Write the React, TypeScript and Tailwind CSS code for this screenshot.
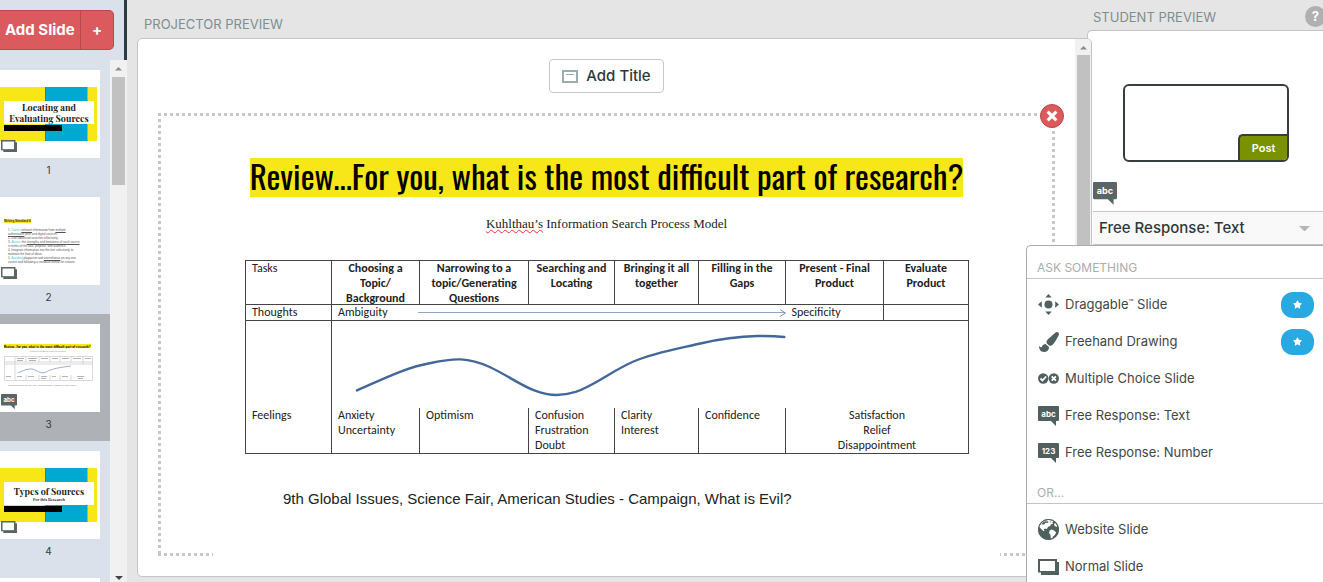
import type { ReactNode } from 'react';
import { FaPaintBrush, FaStar, FaTimes } from 'react-icons/fa';

const ASK_ITEMS = [
  { label: 'Draggable', suffix: ' Slide', icon: <DragIcon />, trademark: true, starred: true },
  { label: 'Freehand Drawing', icon: <FaPaintBrush className="size-5" />, starred: true },
  { label: 'Multiple Choice Slide', icon: <ChoiceIcon /> },
  { label: 'Free Response: Text', icon: <BubbleIcon text="abc" /> },
  { label: 'Free Response: Number', icon: <BubbleIcon text="123" /> },
];

const OTHER_ITEMS = [
  { label: 'Website Slide', icon: <GlobeIcon /> },
  { label: 'Normal Slide', icon: <SlideIcon className="w-[21px]" /> },
];

const HEADINGS = [
  'Choosing a Topic/ Background',
  'Narrowing to a topic/Generating Questions',
  'Searching and Locating',
  'Bringing it all together',
  'Filling in the Gaps',
  'Present - Final Product',
  'Evaluate Product',
];

const COLUMN_WIDTHS = [86, 88, 109, 86, 84, 87, 98, 85];

const FEELINGS = [
  ['Anxiety', 'Uncertainty'],
  ['Optimism'],
  ['Confusion', 'Frustration', 'Doubt'],
  ['Clarity', 'Interest'],
  ['Confidence'],
];

function DragIcon() {
  return (
    <svg viewBox="0 0 21 21" className="size-[21px]" fill="currentColor">
      <circle cx="10.5" cy="10.5" r="4" />
      <path d="M10.5 0l3.2 3.6H7.3zM10.5 21l3.2-3.6H7.3zM0 10.5l3.8-3.2v6.4zM21 10.5l-3.8-3.2v6.4z" />
    </svg>
  );
}

function ChoiceIcon() {
  return (
    <svg viewBox="0 0 21 11" className="w-[21px]" fill="none">
      <circle cx="5.2" cy="5.5" r="5.2" fill="currentColor" />
      <circle cx="15.8" cy="5.5" r="5.2" fill="currentColor" />
      <path d="M2.5 5.5l2 2 3.6-4" stroke="white" strokeWidth="1.8" />
      <path d="M13.7 3.4l4.2 4.2M17.9 3.4l-4.2 4.2" stroke="white" strokeWidth="1.8" />
    </svg>
  );
}

function BubbleIcon({ text, className = 'w-[21px]' }: { text: string; className?: string }) {
  return (
    <svg viewBox="0 0 21 20" className={className}>
      <path d="M1 0h19a1 1 0 0 1 1 1v13a1 1 0 0 1-1 1h-2v5l-5-5H1a1 1 0 0 1-1-1V1a1 1 0 0 1 1-1z" fill="currentColor" />
      <text x="10.5" y="10.5" textAnchor="middle" fontSize="8" fontWeight="700" fontFamily="Inter, sans-serif" fill="white">
        {text}
      </text>
    </svg>
  );
}

function GlobeIcon() {
  return (
    <svg viewBox="0 0 21 21" className="size-[21px]">
      <circle cx="10.5" cy="10.5" r="10.5" fill="currentColor" />
      <path d="M4.5 2.8l3-1.4 4-.6 4 1.2-1.2 1.5.8 1.3-2.2.4-.5 1.6-2.4 1.2-1.2 2-1.9-.6-1.3 1.4 1.1 1.2-1.4.1-2.6-2.7L1 7.4z" fill="white" />
      <path d="M11.6 11.6l2-1 2.8 1.2 1.7 1.7-1.2 2.6-2 1.5-.7 2.1-1.4-.4-.3-3.2-1.4-2zM16 4.8l1.7-.6 1.8 3.3-1.5.3-1.6-1z" fill="white" />
      <path d="M4.6 3.4l2.6-1.2 3.4.3-.8 1.5-2.2-.2-1.4 1.6-2.6.2zM11.5 2.4l1.8.4-.8.9z" fill="currentColor" />
      <circle cx="10.5" cy="10.5" r="10" fill="none" stroke="currentColor" />
    </svg>
  );
}

function SlideIcon({ className }: { className: string }) {
  return (
    <svg viewBox="0 0 21 16" className={className}>
      <path d="M3 3h18v13H3z" fill="currentColor" />
      <path d="M0 0h19v13.5H0z" fill="currentColor" />
      <path d="M2 2h15v10H2z" fill="white" />
    </svg>
  );
}

function Arrow({ down = false, className }: { down?: boolean; className: string }) {
  return (
    <svg viewBox="0 0 8 4" className={className} fill="currentColor">
      <path d={down ? 'M0 0h8L4 4z' : 'M0 4h8L4 0z'} />
    </svg>
  );
}

function Thumb({ number, selected = false, icon, children }: { number: number; selected?: boolean; icon: ReactNode; children: ReactNode }) {
  return (
    <li className={selected ? 'h-[127px] shrink-0 bg-[#aeb2b7] pt-[10px]' : 'h-[127px] shrink-0 bg-[#dbe1ea] pt-[10px]'}>
      <div className="relative h-[88px] w-[100px] overflow-hidden bg-white">
        {children}
        <span className="absolute top-[70px] left-px text-[#5a6665]">{icon}</span>
      </div>
      <p className="w-[97px] pt-1 text-center text-[10px] leading-4 text-[#333b3d]">{number}</p>
    </li>
  );
}

function CoverArt({ children }: { children: ReactNode }) {
  return (
    <div className="mt-[17px] h-[54px] w-[97px] bg-[linear-gradient(90deg,#f7e618_0_45px,#4f7a5c_45px_46px,#00a9d0_46px_87px,#8fc06a_87px_88px,#f7e618_88px)] pt-[14px] pl-1">
      <div className="flex h-[23px] w-[90px] flex-col justify-center bg-white text-center font-['Playfair_Display','Liberation_Serif',serif] font-bold whitespace-nowrap text-[#222]">
        {children}
      </div>
      <div className="mt-px h-[6px] w-[58px] bg-black" />
    </div>
  );
}

function StandardArt() {
  return (
    <div className="pt-[22px] pl-1 font-['Liberation_Sans',sans-serif] text-[3px] leading-[4px] whitespace-nowrap text-[#555]">
      <p className="text-[#333]">
        <strong className="inline-block bg-[#f7e618]">Writing Standard 8</strong>
      </p>
      <div className="pt-[5px] pl-1">
        <p>1. <span className="text-[#27d3e8]">Gather</span> <u>relevant</u> information from <u>multiple</u></p>
        <p><u>authoritative</u> print and digital sources.</p>
        <p>2. Use advanced searches effectively.</p>
        <p>3. <span className="text-[#27d3e8]">Assess</span> the <u>strengths and limitations of each source</u></p>
        <p>in terms of the task, purpose, and audience.</p>
        <p>4. Integrate information into the text selectively to</p>
        <p>maintain the flow of ideas.</p>
        <p>5. <span className="text-[#27d3e8]">Avoiding</span> plagiarism and <u>overreliance</u> on any one</p>
        <p>source and following a standard format for citation.</p>
      </div>
    </div>
  );
}

function ReviewArt() {
  return (
    <div className="pt-5 pl-1 leading-[4px] whitespace-nowrap text-[#777]">
      <p className="font-[Oswald,'Liberation_Sans',sans-serif] text-[4px] text-black">
        <span className="inline-block bg-[#f7e618]">Review...For you, what is the most difficult part of research?</span>
      </p>
      <p className="w-[88px] pt-px text-center font-['Liberation_Serif',serif] text-[2px]">Kuhlthau’s Information Search Process Model</p>
      <svg viewBox="0 0 89 25" className="mt-[3px] h-[25px] w-[89px]" fill="none">
        <path d="M.5.5h88v24H.5zM.5 6h88M.5 8h88M11 .5v24M22 .5V6M35 .5V6M46 .5V6M56 .5V6M67 .5V6M79 .5V8M22 19v5M35 19v5M46 19v5M56 19v5M67 19v5" stroke="#c9c9cd" strokeWidth="0.7" />
        <path d="M14 17C22 13 27 12 31 14S38 18 42 16 50 12 67 10" stroke="#8494b5" strokeWidth="0.8" />
        <path d="M13 2.5h7M24 2.5h9M37 2.5h7M48 2.5h6M58 2.5h7M69 2.5h8M81 2.5h6M13 4.5h6M25 4.5h7M13 20.5h5M24 20.5h6M37 20.5h6M48 20.5h4M58 20.5h6M73 20.5h7M2 20.5h5M37 22.5h5M74 22.5h5" stroke="#a0a0a8" strokeWidth="0.8" />
      </svg>
      <p className="pt-[2px] pl-1 font-['Liberation_Sans',sans-serif] text-[2px]">
        9th Global Issues, Science Fair, American Studies - Campaign, What is Evil?
      </p>
    </div>
  );
}

function Sidebar() {
  return (
    <aside className="flex w-[127px] shrink-0 flex-col">
      <div className="flex h-[60px] shrink-0 items-center border-r-[3px] border-[#2f3b42] bg-[#dbe1ea]">
        <div className="flex h-10 w-[114px] rounded-r-[5px] border border-l-0 border-[#b9484c] bg-[#db5a5e] font-bold text-white">
          <button className="flex-1 border-r border-[#b9484c] pl-[5px] text-left text-[15px] whitespace-nowrap">Add Slide</button>
          <button className="w-8 text-[15px]" aria-label="Choose slide type">+</button>
        </div>
      </div>
      <div className="flex min-h-0 flex-1">
        <ol className="flex w-[110px] flex-col overflow-hidden bg-[#dbe1ea]">
          <Thumb number={1} icon={<SlideIcon className="w-4" />}>
            <CoverArt>
              <p className="text-[9px] leading-[11px]">Locating and</p>
              <p className="text-[9px] leading-[11px]">Evaluating Sources</p>
            </CoverArt>
          </Thumb>
          <Thumb number={2} icon={<SlideIcon className="w-4" />}>
            <StandardArt />
          </Thumb>
          <Thumb number={3} selected icon={<BubbleIcon text="abc" className="w-4" />}>
            <ReviewArt />
          </Thumb>
          <Thumb number={4} icon={<SlideIcon className="w-4" />}>
            <CoverArt>
              <p className="text-[9px] leading-[11px]">Types of Sources</p>
              <p className="text-[4px] leading-[5px]">For this Research</p>
            </CoverArt>
          </Thumb>
          <li className="pt-[10px]">
            <div className="h-[88px] w-[100px] bg-white" />
          </li>
        </ol>
        <div className="flex w-[17px] flex-col items-center justify-between bg-[#f1f1f1]">
          <div className="flex flex-col items-center">
            <Arrow className="mt-[7px] mb-[6px] w-[7px] text-[#8b8b8b]" />
            <div className="h-[108px] w-[13px] bg-[#c1c1c1]" />
          </div>
          <Arrow down className="mb-[2px] w-2 text-[#444]" />
        </div>
      </div>
    </aside>
  );
}

function ProcessTable() {
  const line = 'border-[#444]';
  return (
    <table className={`w-full table-fixed border-collapse border text-xs leading-[15px] text-[#222] font-[Carlito,Lato,sans-serif] ${line}`}>
      <colgroup>
        {COLUMN_WIDTHS.map((width, i) => (
          <col key={i} style={{ width }} />
        ))}
      </colgroup>
      <tbody>
        <tr className="h-[44px] align-top">
          <td className={`border pl-[6px] ${line}`}>Tasks</td>
          {HEADINGS.map((heading) => (
            <th key={heading} className={`h-[44px] border px-[6px] ${line}`}>
              <div className="-mb-1">{heading}</div>
            </th>
          ))}
        </tr>
        <tr className="h-4">
          <td className={`border pl-[6px] ${line}`}>Thoughts</td>
          <td colSpan={5} className={`border-y pl-[6px] ${line}`}>
            <div className="flex items-center gap-[30px]">
              Ambiguity
              <div className="flex flex-1 items-center">
                <div className="h-px flex-1 bg-[#8ea6c8]" />
                <svg viewBox="0 0 7 8" className="-ml-[6px] h-2 w-[7px]" fill="none" stroke="#7291bf">
                  <path d="M1 .5L6.5 4 1 7.5" />
                </svg>
              </div>
            </div>
          </td>
          <td className={`border-y pl-[6px] ${line}`}>Specificity</td>
          <td className={`border ${line}`} />
        </tr>
        <tr>
          <td className={`border-r ${line}`} />
          <td colSpan={7} className="p-0">
            <svg viewBox="0 0 637 87" className="block h-[87px] w-full" fill="none">
              <path
                d="M25 69.500C50 58.500 75 46 99 42C122 37 136 36 158 46C175 54 190 65 204 70C218 75.500 230 75.500 244 71C264 64 280 50 302 40.500C322 32 345 28 369 22.500C388 18 402 15.500 426 15C436 14.800 444 15 453 16"
                stroke="#44679a"
                strokeWidth="2.4"
                strokeLinecap="round"
              />
            </svg>
          </td>
        </tr>
        <tr className="h-[44px] align-top">
          <td className={`border-r pl-[6px] ${line}`}>Feelings</td>
          {FEELINGS.map((words, i) => (
            <td key={i} className={`h-[44px] border-l pl-[6px] ${line}`}>
              {words.map((word) => (
                <div key={word}>{word}</div>
              ))}
            </td>
          ))}
          <td colSpan={2} className={`border-l text-center ${line}`}>
            Satisfaction
            <br />
            Relief
            <br />
            Disappointment
          </td>
        </tr>
      </tbody>
    </table>
  );
}

function SlideCanvas() {
  const row = 'absolute inset-x-0 h-[3px] bg-[repeating-linear-gradient(90deg,#c8c8c8_0_3px,transparent_3px_6px)]';
  const column = 'absolute inset-y-0 w-[3px] bg-[repeating-linear-gradient(180deg,#c8c8c8_0_3px,transparent_3px_6px)]';
  return (
    <div className="relative mx-5 mt-5 h-[443px] pt-[3px]">
      <div className={`${row} top-0`} />
      <div className={`${row} bottom-0`} />
      <div className={`${column} left-0`} />
      <div className={`${column} right-0`} />
      <div className="relative mx-[55px] h-full bg-white px-8 pt-[42px]">
        <h1 className="flex justify-center font-[Oswald,'Liberation_Sans',sans-serif] text-[33px] leading-[36px] whitespace-nowrap text-black">
          <span className="bg-[#f7e618] pb-[3px]">Review...For you, what is the most difficult part of research?</span>
        </h1>
        <p className="mt-[19px] text-center font-['Liberation_Serif',serif] text-[13px] leading-4 text-[#222]">
          <span className="underline decoration-red-500 decoration-wavy decoration-1">Kuhlthau’s</span> Information Search Process Model
        </p>
        <div className="mt-7">
          <ProcessTable />
        </div>
        <p className="mt-[35px] pl-[38px] font-['Liberation_Sans',sans-serif] text-[15px] leading-5 text-[#222]">
          9th Global Issues, Science Fair, American Studies - Campaign, What is Evil?
        </p>
      </div>
      <button
        aria-label="Remove slide image"
        className="absolute -top-[9px] -right-[9px] flex size-6 items-center justify-center rounded-full border border-[#b9484c] bg-[#db5a5e] text-white"
      >
        <FaTimes className="size-[14px] stroke-white stroke-[30px]" />
      </button>
    </div>
  );
}

function ProjectorPreview() {
  return (
    <main className="relative z-10 ml-[10px] flex min-w-0 flex-1 flex-col pb-[5px]">
      <h2 className="h-[38px] shrink-0 pt-4 pl-[7px] text-[13px] leading-4 text-[#7d8e8f]">PROJECTOR PREVIEW</h2>
      <div className="flex min-h-0 flex-1 overflow-hidden rounded-[5px] border border-[#c3c5c5] bg-white">
        <div className="min-w-0 flex-1 pt-5">
          <button className="mx-auto flex h-[34px] w-[115px] items-center justify-center gap-2 rounded-[4px] border border-[#c6c9c9] text-[15px] font-medium text-[#2f383a]">
            <svg viewBox="0 0 16 13" className="w-4" fill="none" stroke="#9bacaf">
              <path d="M1 1h14v11H1z" strokeWidth="2" />
              <path d="M4 4.5h8" />
            </svg>
            Add Title
          </button>
          <SlideCanvas />
        </div>
        <div className="flex w-4 flex-col items-center bg-[#f1f1f1]">
          <Arrow className="mt-[7px] mb-[5px] w-[7px] shrink-0 text-[#8b8b8b]" />
          <div className="w-[13px] flex-1 bg-[#c1c1c1]" />
        </div>
      </div>
    </main>
  );
}

function MenuHeading({ children }: { children: ReactNode }) {
  return (
    <h3 className="flex h-[33px] items-end border-b border-[#c3c5c5] pb-[2px] pl-[10px] text-xs leading-4 text-[#a9adad]">{children}</h3>
  );
}

type Item = { label: string; suffix?: string; icon: ReactNode; trademark?: boolean; starred?: boolean };

function MenuItem({ item }: { item: Item }) {
  return (
    <li>
      <button className="flex h-[37px] w-full items-center pr-[9px] pl-[11px] text-left text-[13px] text-[#3f4747]">
        <span className="mr-[6px] flex w-[21px] justify-center text-[#50605f]">{item.icon}</span>
        <span className="flex-1">
          {item.label}
          {item.trademark && <sup className="text-[8px]">™</sup>}
          {item.suffix}
        </span>
        {item.starred && (
          <span className="flex h-[26px] w-[33px] items-center justify-center rounded-[12px] bg-[#29a9e1] text-white">
            <FaStar className="size-[9px]" />
          </span>
        )}
      </button>
    </li>
  );
}

function TypeMenu() {
  return (
    <div className="absolute top-[245px] right-0 -left-[61px] z-20 h-[400px] rounded-tl-[5px] border-t border-l border-[#a9acac] bg-white">
      <MenuHeading>ASK SOMETHING</MenuHeading>
      <ul className="pt-[7px]">
        {ASK_ITEMS.map((item) => (
          <MenuItem key={item.label} item={item} />
        ))}
      </ul>
      <MenuHeading>OR...</MenuHeading>
      <ul className="pt-[7px]">
        {OTHER_ITEMS.map((item) => (
          <MenuItem key={item.label} item={item} />
        ))}
      </ul>
    </div>
  );
}

function StudentPreview() {
  return (
    <section className="relative -ml-[5px] flex w-[236px] shrink-0 flex-col">
      <div className="flex h-[30px] shrink-0 items-center justify-between pt-[3px] pl-[6px]">
        <h2 className="text-[13px] leading-4 text-[#7d8e8f]">STUDENT PREVIEW</h2>
        <button aria-label="Help" className="-mr-[3px] size-[21px] shrink-0 rounded-full bg-[#b0b0b0] text-[13px] leading-[21px] font-bold text-white">
          ?
        </button>
      </div>
      <div className="flex-1 rounded-tl-[5px] border-t border-l border-[#c3c5c5] bg-white pl-[5px]">
        <div className="relative mt-[53px] ml-[30px] h-[78px] w-[166px] overflow-hidden rounded-[6px] border-2 border-[#383d3f]">
          <textarea aria-label="Student response" className="block size-full resize-none" />
          <button className="absolute right-0 bottom-0 h-[26px] w-[49px] rounded-tl-[5px] border-t-2 border-l-2 border-[#383d3f] bg-[#7a9100] text-[11px] font-semibold text-white">
            Post
          </button>
        </div>
        <BubbleIcon text="abc" className="mt-5 w-6 text-[#5a6665]" />
        <div className="relative mt-[6px] h-[34px] border-y border-[#c3c5c5] bg-[#f9f9f9]">
          <select aria-label="Slide type" className="size-full appearance-none pl-[6px] text-[15px] font-medium text-[#2f383a]">
            <option>Free Response: Text</option>
            <option>Free Response: Number</option>
          </select>
          <Arrow down className="pointer-events-none absolute top-[14px] right-[13px] w-[11px] text-[#b4b7b7]" />
        </div>
      </div>
      <TypeMenu />
    </section>
  );
}

export default function App() {
  return (
    <div className="flex h-screen overflow-hidden bg-[#e5e5e5] font-[Inter,sans-serif]">
      <Sidebar />
      <ProjectorPreview />
      <StudentPreview />
    </div>
  );
}
